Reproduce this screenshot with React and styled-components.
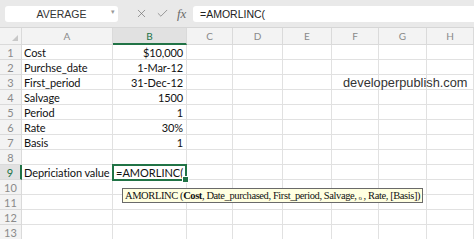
import React from 'react';
import styled, { createGlobalStyle } from 'styled-components';
import { X, Check } from 'lucide-react';

const columns = ['A', 'B', 'C', 'D', 'E', 'F', 'G', 'H'];
const widths = [91, 74, 46, 50, 49, 47, 48];

const rows = [
    ['Cost', '$10,000'],
    ['Purchse_date', '1-Mar-12'],
    ['First_period', '31-Dec-12'],
    ['Salvage', '1500'],
    ['Period', '1'],
    ['Rate', '30%'],
    ['Basis', '1'],
    ['', ''],
    ['Depriciation value', '=AMORLINC('],
    ['', ''],
    ['', ''],
    ['', ''],
    ['', '']
];

export default class App extends React.Component {
    render() {
        return (
            <Page>
                <GlobalStyle />

                <TopBar>
                    <NameBox>
                        AVERAGE
                        <Arrow>▾</Arrow>
                    </NameBox>
                    <Icons>
                        <X size={13} strokeWidth={1.2} />
                        <Check size={13} strokeWidth={1.2} />
                        <Fx>fx</Fx>
                    </Icons>
                    <FormulaBox>=AMORLINC(</FormulaBox>
                </TopBar>

                <Sheet>
                    <Corner><Triangle /></Corner>
                    {columns.map((col) => (
                        <ColHeader key={col} $active={col === 'B'}>{col}</ColHeader>
                    ))}

                    {rows.map((row, i) => (
                        <React.Fragment key={i}>
                            <RowHeader $active={i === 8}>{i + 1}</RowHeader>
                            <Cell>{row[0]}</Cell>
                            {i === 8 ? (
                                <ActiveCell>
                                    {row[1]}
                                    <Handle />
                                </ActiveCell>
                            ) : (
                                <Cell $right>{row[1]}</Cell>
                            )}
                            {columns.slice(2).map((col) => (
                                <Cell key={col} />
                            ))}
                        </React.Fragment>
                    ))}

                    <Tooltip>
                        AMORLINC (<b>Cost</b>, Date_purchased, First_period, Salvage, ₒ , Rate, [Basis])
                    </Tooltip>
                    <Watermark>developerpublish.com</Watermark>
                </Sheet>
            </Page>
        );
    }
}

const GlobalStyle = createGlobalStyle`
    html, body {
        margin: 0;
        padding: 0;
        background: #fff;
        overflow: hidden;
    }
`;

const Page = styled.div`
    width: 474px;
    height: 239px;
    overflow: hidden;
    font-family: Lato, "Liberation Sans", sans-serif;
`;

const TopBar = styled.div`
    display: flex;
    align-items: center;
    height: 28px;
    padding: 0 0 0 5px;
    background: #e9e9e9;
    border-bottom: 1px solid #d6d6d6;
    box-sizing: border-box;
`;

const NameBox = styled.div`
    position: relative;
    width: 113px;
    height: 16px;
    background: #fff;
    border-radius: 3px;
    display: flex;
    align-items: center;
    justify-content: center;
    font-family: "Liberation Sans", sans-serif;
    font-size: 10.5px;
    color: #333;
`;

const Arrow = styled.span`
    position: absolute;
    right: 3px;
    top: 2px;
    font-size: 7px;
    color: #999;
`;

const Icons = styled.div`
    display: flex;
    align-items: center;
    gap: 8px;
    width: 75px;
    padding-left: 17px;
    box-sizing: border-box;
    color: #6a6a6a;
`;

const Fx = styled.span`
    font-family: "Liberation Serif", serif;
    font-style: italic;
    font-size: 13px;
    color: #6a6a6a;
`;

const FormulaBox = styled.div`
    flex: 1;
    height: 16px;
    background: #fff;
    border-radius: 3px 0 0 3px;
    display: flex;
    align-items: center;
    padding-left: 7px;
    font-family: "Liberation Sans", sans-serif;
    font-size: 10.5px;
    color: #222;
`;

const Sheet = styled.div`
    position: relative;
    display: grid;
    grid-template-columns: 22px ${widths.map((w) => w + 'px').join(' ')} 1fr;
    grid-template-rows: 17px;
    grid-auto-rows: 15px;
`;

const Corner = styled.div`
    position: relative;
    background: #f3f3f3;
    border-right: 1px solid #dadada;
    border-bottom: 1px solid #dadada;
`;

const Triangle = styled.div`
    position: absolute;
    right: 3px;
    bottom: 3px;
    width: 0;
    height: 0;
    border-left: 6px solid transparent;
    border-bottom: 6px solid #c8c8c8;
`;

const ColHeader = styled.div`
    display: flex;
    align-items: center;
    justify-content: center;
    background: ${(p) => (p.$active ? '#e1e1e1' : '#f3f3f3')};
    border-right: 1px solid #dadada;
    border-bottom: ${(p) => (p.$active ? '2px solid #217346' : '1px solid #dadada')};
    color: ${(p) => (p.$active ? '#217346' : '#8a8a8a')};
    font-size: 10px;
    box-sizing: border-box;
`;

const RowHeader = styled.div`
    display: flex;
    align-items: center;
    justify-content: center;
    background: ${(p) => (p.$active ? '#e1e1e1' : '#f3f3f3')};
    border-right: ${(p) => (p.$active ? '2px solid #217346' : '1px solid #dadada')};
    border-bottom: 1px solid #dadada;
    color: ${(p) => (p.$active ? '#217346' : '#8a8a8a')};
    font-size: 11px;
    box-sizing: border-box;
`;

const Cell = styled.div`
    display: flex;
    align-items: center;
    justify-content: ${(p) => (p.$right ? 'flex-end' : 'flex-start')};
    padding: 0 3px 0 2px;
    border-right: 1px solid #e1e1e1;
    border-bottom: 1px solid #e1e1e1;
    font-size: 11px;
    letter-spacing: -0.1px;
    color: #111;
    white-space: nowrap;
    box-sizing: border-box;
`;

const ActiveCell = styled.div`
    position: relative;
    display: flex;
    align-items: center;
    padding: 0 2px;
    margin: -1px 0 0 -1px;
    border: 2px solid #217346;
    font-size: 11px;
    color: #111;
    white-space: nowrap;
    box-sizing: border-box;
    height: 17px;
`;

const Handle = styled.div`
    position: absolute;
    right: -4px;
    bottom: -4px;
    width: 5px;
    height: 5px;
    background: #217346;
    border: 1px solid #fff;
`;

const Tooltip = styled.div`
    position: absolute;
    left: 122px;
    top: 160px;
    padding: 1px 2px;
    background: #ffffe1;
    border: 1px solid #6a6a6a;
    font-family: "Liberation Serif", serif;
    font-size: 10.5px;
    letter-spacing: -0.4px;
    color: #111;
    white-space: nowrap;
`;

const Watermark = styled.div`
    position: absolute;
    left: 343px;
    top: 47px;
    font-family: "Liberation Sans", sans-serif;
    font-size: 12.8px;
    color: #333;
`;
